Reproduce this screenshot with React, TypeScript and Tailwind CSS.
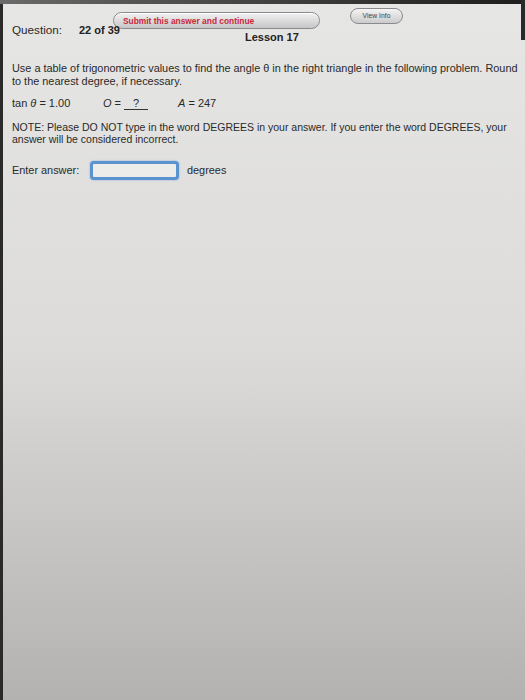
import React from 'react';

export default function App() {
  return (
    <div
      className="relative w-[525px] h-[700px] overflow-hidden bg-gradient-to-b from-[#e6e6e4] via-[#dcdbd9] to-[#b4b2b0] text-[#2a2a2a]"
      style={{ fontFamily: '"Liberation Sans", Arial, sans-serif' }}
    >
      {/* photo edges */}
      <div className="absolute left-0 top-0 h-full w-[3px] bg-[#2a2a2a]" />
      <div className="absolute left-0 top-0 h-[4px] w-full bg-gradient-to-r from-[#6a6a6a] to-[#1e1e1e]" />
      <div className="absolute right-0 top-0 h-[40px] w-[4px] bg-[#2a2a2a]" />

      <div className="pl-[12px] pr-[4px] pt-[8px]">
        {/* Header */}
        <div className="relative h-[38px]">
          <button className="absolute left-[101px] top-[4px] h-[17px] w-[207px] rounded-full border border-[#8a8a8e] bg-gradient-to-b from-[#f2f2f2] to-[#c6c6c8] pl-[9px] text-left text-[8.4px] font-bold leading-[10px] text-[#c8283a] shadow-[inset_0_1px_0_#fff]">
            Submit this answer and continue
          </button>
          <button className="absolute left-[338px] top-0 h-[16px] w-[53px] rounded-full border border-[#8a8a8e] bg-gradient-to-b from-[#f4f4f4] to-[#cbcbcd] text-[6.8px] text-[#444]">
            View Info
          </button>
          <div className="absolute left-0 top-[13px] flex items-baseline">
            <span className="w-[67px] text-[11.7px]">Question:</span>
            <span className="text-[11px] font-semibold text-[#222]">22 of 39</span>
          </div>
          <div className="absolute left-[233px] top-[21px] text-[11px] font-bold text-[#222]">Lesson 17</div>
        </div>

        {/* Problem */}
        <p className="mt-[16px] whitespace-nowrap text-[10.9px] leading-[12.5px]">
          Use a table of trigonometric values to find the angle θ in the right triangle in the following problem. Round
          <br />
          to the nearest degree, if necessary.
        </p>

        <div className="mt-[8px] flex items-baseline text-[11px]">
          <span className="w-[91px]">tan <i>θ</i> = 1.00</span>
          <span className="w-[75px]">
            <i>O</i> = <span className="inline-block w-[24px] border-b border-[#333] text-center leading-[11px]">?</span>
          </span>
          <span>
            <i>A</i> = 247
          </span>
        </div>

        <p className="mt-[9px] whitespace-nowrap text-[10.5px] leading-[12.5px]">
          NOTE: Please DO NOT type in the word DEGREES in your answer. If you enter the word DEGREES, your
          <br />
          answer will be considered incorrect.
        </p>

        <div className="mt-[15px] flex items-center text-[10.9px]">
          <span className="w-[78px]">Enter answer:</span>
          <div className="h-[19px] w-[89px] rounded-[4px] border-[3px] border-[#5b93cf] bg-[#ececea] shadow-[0_0_2px_#7aa8dc]" />
          <span className="ml-[8px]">degrees</span>
        </div>
      </div>
    </div>
  );
}
